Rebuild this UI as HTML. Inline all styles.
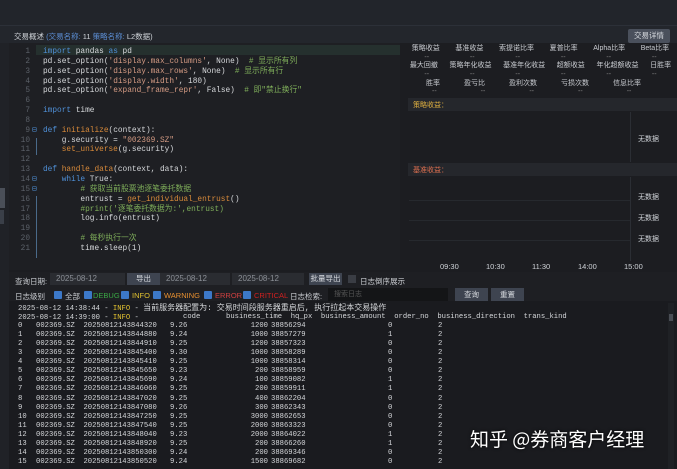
<!DOCTYPE html>
<html><head><meta charset="utf-8"><style>
*{margin:0;padding:0;box-sizing:border-box}
body{width:677px;height:469px;overflow:hidden;background:#1c1d21;font-family:"Liberation Sans","Noto Sans CJK SC",sans-serif;color:#cfd3d8;position:relative}
.a{position:absolute;white-space:pre}
.m{font-family:"Liberation Mono","Noto Sans CJK SC",monospace}
.code{font-size:7.8px;line-height:9.85px}
.kw{color:#4f8fd6}.fn{color:#d88a3a}.st{color:#d39a83}.cm{color:#7fae5a}
.s{font-size:7.5px;color:#c9ccd1}
.log{font-size:7.2px;line-height:9.07px;color:#d6d8db}
.btn{background:#3e4450;color:#d8dbe0;font-size:7.5px;text-align:center}
.inp{background:#2a2c31;color:#8d9198;font-size:8px;padding-left:6px}
.cb{width:8px;height:8px;background:#3c78c8;border-radius:1px}
.mt{white-space:normal}
.mt div{display:flex;justify-content:space-around;height:8.7px;line-height:8.7px;white-space:nowrap}
.r{text-align:right}
</style></head><body>
<div class="a" style="left:0;top:0;width:677px;height:25px;background:#22252b"></div>
<div class="a" style="left:0;top:25px;width:677px;height:1px;background:#2c3038"></div>
<div class="a" style="left:0;top:26px;width:677px;height:17px;background:#23262c"></div>
<div class="a" style="left:14px;top:31px;font-size:7.5px;color:#cfd3d8">交易概述 <span style="color:#5c8fd6">(交易名称: </span>11 <span style="color:#5c8fd6">策略名称: </span>L2数据)</div>
<div class="a btn" style="left:628px;top:29px;width:42px;height:14px;line-height:14px;border-radius:2px;background:#4a505c">交易详情</div>
<!-- left strip -->
<div class="a" style="left:0;top:43px;width:9px;height:426px;background:#202227"></div>
<div class="a" style="left:0;top:188px;width:5px;height:20px;background:#4a4f58"></div>
<div class="a" style="left:0;top:210px;width:4px;height:14px;background:#3a3f48"></div>
<!-- editor -->
<div class="a" style="left:9px;top:43px;width:391px;height:227px;background:#1e1f23"></div>
<div class="a" style="left:36px;top:45px;width:364px;height:10px;background:#25302e"></div>
<div class="a m code r" style="left:0;top:48px;width:30px;color:#5b6068">1
2
3
4
5
6
7
8
9
10
11
12
13
14
15
16
17
18
19
20
21</div>
<div class="a m code" style="left:32px;top:127px;color:#4f8fd6">⊟</div>
<div class="a m code" style="left:32px;top:176px;color:#4f8fd6">⊟</div>
<div class="a m code" style="left:32px;top:186px;color:#4f8fd6">⊟</div>
<div class="a" style="left:36px;top:138px;width:1px;height:17px;background:#4a6a8a"></div>
<div class="a" style="left:36px;top:196px;width:1px;height:62px;background:#4a6a8a"></div>
<div class="a m code" style="left:43px;top:48px;color:#d6d8db"><span class="kw">import</span> pandas <span class="kw">as</span> pd
pd.set_option(<span class="st">'display.max_columns'</span>, None)  <span class="cm"># 显示所有列</span>
pd.set_option(<span class="st">'display.max_rows'</span>, None)  <span class="cm"># 显示所有行</span>
pd.set_option(<span class="st">'display.width'</span>, 180)
pd.set_option(<span class="st">'expand_frame_repr'</span>, False)  <span class="cm"># 即"禁止换行"</span>

<span class="kw">import</span> time

<span class="kw">def</span> <span class="fn">initialize</span>(context):
    g.security = <span class="st">"002369.SZ"</span>
    <span class="fn">set_universe</span>(g.security)

<span class="kw">def</span> <span class="fn">handle_data</span>(context, data):
    <span class="kw">while</span> True:
        <span class="cm"># 获取当前股票池逐笔委托数据</span>
        entrust = <span class="fn">get_individual_entrust</span>()
        <span class="cm">#print('逐笔委托数据为:',entrust)</span>
        log.info(entrust)

        <span class="cm"># 每秒执行一次</span>
        time.sleep(1)</div>
<!-- right panel -->
<div class="a s mt" style="left:404px;top:45px;width:273px;font-size:7px"><div><span>策略收益</span><span>基准收益</span><span>索提诺比率</span><span>夏普比率</span><span>Alpha比率</span><span>Beta比率</span></div><div style="color:#888"><span>--</span><span>--</span><span>--</span><span>--</span><span>--</span><span>--</span></div><div><span>最大回撤</span><span>策略年化收益</span><span>基准年化收益</span><span>超额收益</span><span>年化超额收益</span><span>日胜率</span></div><div style="color:#888"><span>--</span><span>--</span><span>--</span><span>--</span><span>--</span><span>--</span></div><div style="justify-content:flex-start;gap:24px;padding-left:22px"><span>胜率</span><span>盈亏比</span><span>盈利次数</span><span>亏损次数</span><span>信息比率</span></div><div style="justify-content:flex-start;gap:44px;padding-left:28px;color:#888"><span>--</span><span>--</span><span>--</span><span>--</span><span>--</span></div></div>
<div class="a" style="left:408px;top:98px;width:269px;height:13px;background:#25272c"></div>
<div class="a" style="left:413px;top:100px;font-size:7px;color:#e0b040">策略收益：</div>
<div class="a" style="left:630px;top:112px;width:1px;height:50px;background:#2b2e34"></div>
<div class="a" style="left:638px;top:134px;font-size:7px">无数据</div>
<div class="a" style="left:408px;top:163px;width:269px;height:13px;background:#25272c"></div>
<div class="a" style="left:413px;top:165px;font-size:7px;color:#e07050">基准收益：</div>
<div class="a" style="left:630px;top:177px;width:1px;height:84px;background:#2b2e34"></div>
<div class="a" style="left:409px;top:200px;width:221px;height:1px;background:#26292e"></div>
<div class="a" style="left:409px;top:220px;width:221px;height:1px;background:#26292e"></div>
<div class="a" style="left:409px;top:240px;width:221px;height:1px;background:#26292e"></div>
<div class="a" style="left:638px;top:192px;font-size:7px">无数据</div>
<div class="a" style="left:638px;top:213px;font-size:7px">无数据</div>
<div class="a" style="left:638px;top:234px;font-size:7px">无数据</div>
<div class="a" style="left:440px;top:262px;font-size:7.5px">09:30</div>
<div class="a" style="left:486px;top:262px;font-size:7.5px">10:30</div>
<div class="a" style="left:532px;top:262px;font-size:7.5px">11:30</div>
<div class="a" style="left:578px;top:262px;font-size:7.5px">14:00</div>
<div class="a" style="left:624px;top:262px;font-size:7.5px">15:00</div>
<!-- controls -->
<div class="a" style="left:9px;top:272px;width:668px;height:29px;background:#1e1f23"></div>
<div class="a s" style="left:15px;top:276px">查询日期:</div>
<div class="a inp" style="left:50px;top:273px;width:75px;height:12px;line-height:12px">2025-08-12</div>
<div class="a btn" style="left:127px;top:273px;width:33px;height:12px;line-height:12px">导出</div>
<div class="a inp" style="left:160px;top:273px;width:70px;height:12px;line-height:12px">2025-08-12</div>
<div class="a inp" style="left:232px;top:273px;width:72px;height:12px;line-height:12px">2025-08-12</div>
<div class="a btn" style="left:309px;top:273px;width:33px;height:12px;line-height:12px">批量导出</div>
<div class="a" style="left:348px;top:275px;width:8px;height:8px;background:#3a3d44"></div>
<div class="a s" style="left:360px;top:276px">日志倒序展示</div>
<div class="a s" style="left:15px;top:291px">日志级别</div>
<div class="a cb" style="left:54px;top:291px"></div><div class="a s" style="left:65px;top:291px">全部</div>
<div class="a cb" style="left:84px;top:291px"></div><div class="a s" style="left:93px;top:291px;color:#3aa845">DEBUG</div>
<div class="a cb" style="left:121px;top:291px"></div><div class="a s" style="left:132px;top:291px;color:#e0c030">INFO</div>
<div class="a cb" style="left:153px;top:291px"></div><div class="a s" style="left:164px;top:291px;color:#e89030">WARNING</div>
<div class="a cb" style="left:204px;top:291px"></div><div class="a s" style="left:215px;top:291px;color:#d04040">ERROR</div>
<div class="a cb" style="left:243px;top:291px"></div><div class="a s" style="left:254px;top:291px;color:#d02020">CRITICAL</div>
<div class="a s" style="left:290px;top:291px">日志检索:</div>
<div class="a inp" style="left:328px;top:288px;width:120px;height:13px;line-height:13px;background:#141517;font-size:7px;color:#555">搜索日志</div>
<div class="a btn" style="left:455px;top:288px;width:33px;height:13px;line-height:13px">查询</div>
<div class="a btn" style="left:491px;top:288px;width:33px;height:13px;line-height:13px">重置</div>
<!-- log -->
<div class="a" style="left:9px;top:301px;width:668px;height:168px;background:#1a1b1f"></div>
<div class="a" style="left:668px;top:303px;width:6px;height:166px;background:#1f2125"></div>
<div class="a" style="left:669px;top:314px;width:4px;height:7px;background:#4a4e55"></div>
<div class="a m log" style="left:18px;top:304px">2025-08-12 14:38:44 - <span style="color:#e0c030">INFO</span> - <span style="font-size:8px">当前服务器配置为: 交易时间段服务器重启后, 执行拉起本交易操作</span>
2025-08-12 14:39:00 - <span style="color:#e0c030">INFO</span> -</div>
<div class="a m log" style="left:183px;top:313px">code</div>
<div class="a m log" style="left:226px;top:313px">business_time  hq_px  business_amount  order_no  business_direction  trans_kind</div>
<div class="a m log" style="left:18px;top:322px">0
1
2
3
4
5
6
7
8
9
10
11
12
13
14
15</div>
<div class="a m log" style="left:36px;top:322px">002369.SZ  20250812143844320
002369.SZ  20250812143844880
002369.SZ  20250812143844910
002369.SZ  20250812143845400
002369.SZ  20250812143845410
002369.SZ  20250812143845650
002369.SZ  20250812143845690
002369.SZ  20250812143846060
002369.SZ  20250812143847020
002369.SZ  20250812143847080
002369.SZ  20250812143847250
002369.SZ  20250812143847540
002369.SZ  20250812143848040
002369.SZ  20250812143848920
002369.SZ  20250812143850300
002369.SZ  20250812143850520</div>
<div class="a m log" style="left:170px;top:322px">9.26
9.24
9.25
9.30
9.25
9.23
9.24
9.25
9.25
9.26
9.25
9.25
9.23
9.25
9.24
9.24</div>
<div class="a m log r" style="left:230px;top:322px;width:38px">1200
1000
1200
1000
1000
200
100
200
400
300
3000
2000
2000
200
200
1500</div>
<div class="a m log" style="left:271px;top:322px">38856294
38857279
38857323
38858289
38858314
38858959
38859082
38859911
38862204
38862343
38862653
38863323
38864022
38866260
38869346
38869682</div>
<div class="a m log" style="left:388px;top:322px">0
1
0
0
0
0
1
1
0
0
0
0
1
1
0
0</div>
<div class="a m log" style="left:438px;top:322px">2
2
2
2
2
2
2
2
2
2
2
2
2
2
2
2</div>
<div class="a" style="left:470px;top:425px;font-size:19px;color:#fff;font-family:'Noto Sans CJK SC',sans-serif;text-shadow:0 0 3px #000">知乎 @券商客户经理</div>
</body></html>
